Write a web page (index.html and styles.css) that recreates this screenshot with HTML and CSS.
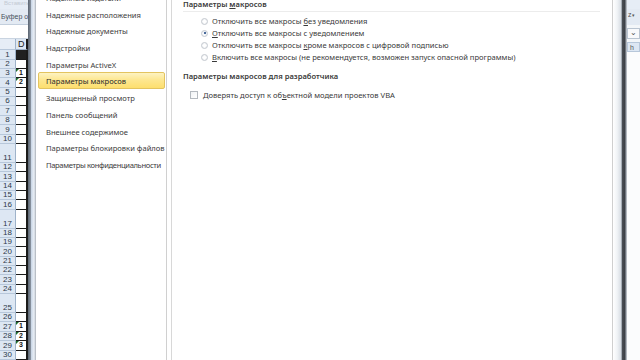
FILE: index.html
```html
<!DOCTYPE html>
<html lang="ru">
<head>
<meta charset="utf-8">
<title>Центр управления безопасностью</title>
<link rel="stylesheet" href="styles.css">
</head>
<body>
<div class="screen">
  <div class="xl-left">
    <div class="xl-ribbon"><span class="faded">Вставить</span></div>
    <div class="xl-group">Буфер о</div>
    <div class="xl-fbar"></div>
    <div class="xl-grid">
      <div class="rh corner"></div><div class="cd head">D</div>
      <div class="rh">1</div><div class="cd black"></div>
      <div class="rh">2</div><div class="cd"></div>
      <div class="rh">3</div><div class="cd tx">1</div>
      <div class="rh">4</div><div class="cd tx">2</div>
      <div class="rh">5</div><div class="cd"></div>
      <div class="rh">6</div><div class="cd"></div>
      <div class="rh">7</div><div class="cd"></div>
      <div class="rh">8</div><div class="cd"></div>
      <div class="rh">9</div><div class="cd"></div>
      <div class="rh">10</div><div class="cd"></div>
      <div class="rh tall">11</div><div class="cd tall"></div>
      <div class="rh">12</div><div class="cd"></div>
      <div class="rh">13</div><div class="cd"></div>
      <div class="rh">14</div><div class="cd"></div>
      <div class="rh">15</div><div class="cd"></div>
      <div class="rh">16</div><div class="cd"></div>
      <div class="rh tall">17</div><div class="cd tall"></div>
      <div class="rh">18</div><div class="cd"></div>
      <div class="rh">19</div><div class="cd"></div>
      <div class="rh">20</div><div class="cd"></div>
      <div class="rh">21</div><div class="cd"></div>
      <div class="rh">22</div><div class="cd"></div>
      <div class="rh">23</div><div class="cd"></div>
      <div class="rh">24</div><div class="cd"></div>
      <div class="rh tall">25</div><div class="cd tall"></div>
      <div class="rh">26</div><div class="cd"></div>
      <div class="rh">27</div><div class="cd tx">1</div>
      <div class="rh">28</div><div class="cd tx">2</div>
      <div class="rh">29</div><div class="cd tx">3</div>
      <div class="rh">30</div><div class="cd"></div>
    </div>
  </div>
  <div class="split-dark"></div>
  <div class="frame-left"></div>

  <div class="dialog">
    <nav class="nav">
      <div class="nav-item cut">Надежные издатели</div>
      <div class="nav-item">Надежные расположения</div>
      <div class="nav-item">Надежные документы</div>
      <div class="nav-item">Надстройки</div>
      <div class="nav-item">Параметры ActiveX</div>
      <div class="nav-item active">Параметры макросов</div>
      <div class="nav-item">Защищенный просмотр</div>
      <div class="nav-item">Панель сообщений</div>
      <div class="nav-item">Внешнее содержимое</div>
      <div class="nav-item">Параметры блокировки файлов</div>
      <div class="nav-item tight">Параметры конфиденциальности</div>
    </nav>
    <div class="nav-sep"></div>
    <main class="content">
      <h2 class="sec-title">Параметры <u>м</u>акросов</h2>
      <div class="options">
        <label class="opt"><span class="radio"></span><span>Отключить все макросы <u>б</u>ез уведомления</span></label>
        <label class="opt"><span class="radio on"></span><span><u>О</u>тключить все макросы с уведомлением</span></label>
        <label class="opt"><span class="radio"></span><span>Отключить все макросы <u>к</u>роме макросов с цифровой подписью</span></label>
        <label class="opt"><span class="radio"></span><span><u>В</u>ключить все макросы (не рекомендуется, возможен запуск опасной программы)</span></label>
      </div>
      <h2 class="sec-title plain">Параметры макросов для разработчика</h2>
      <label class="chk-row"><span class="chk"></span><span>Доверять доступ к об<u>ъ</u>ектной модели проектов VBA</span></label>
    </main>
  </div>

  <div class="frame-right"></div>
  <div class="xl-right">
    <div class="xr-ribbon"></div>
    <div class="xr-group">z<span class="tiny">▾</span></div>
    <div class="xr-drop">⌄</div>
    <div class="xr-head">h</div>
    <div class="xr-col"></div>
  </div>
</div>
</body>
</html>
```

FILE: styles.css
```css
* { box-sizing: border-box; }
html, body { margin: 0; padding: 0; }
body {
  width: 640px;
  height: 360px;
  overflow: hidden;
  background: #ffffff;
  font-family: "Noto Sans", "Open Sans", sans-serif;
  color: #3b3b3b;
}
.screen {
  display: flex;
  width: 640px;
  height: 360px;
  overflow: hidden;
}

/* ---------- Excel left strip ---------- */
.xl-left {
  width: 28px;
  flex: none;
  display: flex;
  flex-direction: column;
  background: #ffffff;
  font-family: "Liberation Sans", Arial, sans-serif;
}
.xl-ribbon {
  height: 9px;
  background: #e6edf6;
  font-size: 6px;
  color: #c3cad3;
  padding-left: 4px;
  overflow: hidden;
  line-height: 6px;
  white-space: nowrap;
}
.xl-group {
  height: 16px;
  background: #e3eaf3;
  font-size: 7px;
  line-height: 16px;
  padding-left: 1px;
  color: #47505c;
  white-space: nowrap;
  border-bottom: 1px solid #c3cfdd;
}
.xl-fbar {
  height: 15px;
  background: #ffffff;
  border-bottom: 1px solid #c9d4e1;
}
.xl-grid {
  display: grid;
  grid-template-columns: 16px 12px;
  grid-template-rows: 11px;
  grid-auto-rows: 9.4px;
}
.rh {
  background: #dde7f3;
  border-bottom: 1px solid #b7c7da;
  border-right: 1px solid #9fb3ca;
  font-size: 8px;
  line-height: 8px;
  color: #2e3a4a;
  display: flex;
  align-items: flex-end;
  justify-content: center;
}
.rh.corner { background: #e6edf6; }
.tall { grid-row: span 2; }
.cd {
  border-bottom: 1px solid #1a1a1a;
  border-right: 2px solid #1a1a1a;
  background: #fff;
  font-size: 7px;
  font-weight: bold;
  line-height: 8px;
  color: #111;
  padding-left: 3px;
  position: relative;
}
.cd.head {
  background: #dde7f3;
  border-bottom: 1px solid #9fb3ca;
  border-right: 2px solid #1a1a1a;
  font-weight: normal;
  font-size: 9px;
  line-height: 10px;
  color: #222;
  padding-left: 2px;
}
.cd.black { background: #202020; }
.cd.tx::before {
  content: "";
  position: absolute;
  left: 0;
  top: 0;
  border-top: 3px solid #1d6b2c;
  border-right: 3px solid transparent;
}
.split-dark {
  width: 3px;
  flex: none;
  background: linear-gradient(90deg, #5a6470, #8c96a3);
}
.frame-left {
  width: 5px;
  flex: none;
  background: linear-gradient(90deg, #c4d2e3, #e4ebf4 60%, #d3d9e0);
  border-right: 1px solid #b9bfc7;
}

/* ---------- Dialog ---------- */
.dialog {
  width: 577px;
  flex: none;
  display: flex;
  background: #ffffff;
  font-size: 7.6px;
}
.nav {
  width: 130px;
  flex: none;
  padding: 0 1px 0 2px;
  display: flex;
  flex-direction: column;
}
.nav-item {
  height: 16.7px;
  line-height: 16px;
  padding-left: 7px;
  color: #3c3c3c;
  white-space: nowrap;
  border: 1px solid transparent;
}
.nav-item.tight { letter-spacing: -0.35px; }
.nav-item.cut { margin-top: -11px; }
.nav-item.active {
  background: linear-gradient(180deg, #fdf3c2 0%, #fde791 45%, #fddf6e 100%);
  border-color: #e3c45f;
  border-radius: 2px;
  color: #2a2a2a;
}
.nav-sep {
  width: 6px;
  flex: none;
  border-left: 1px solid #d0d0d0;
  border-right: 1px solid #d8d8d8;
}
.content {
  flex: 1;
  padding: 0 12px 0 11px;
  border-right: 1px solid #cfcfcf;
}
.sec-title {
  margin: 0;
  font-size: 7.6px;
  font-weight: 600;
  color: #3a3a3a;
  height: 12px;
  line-height: 8px;
  border-bottom: 1px solid #ececec;
}
.sec-title.plain {
  margin-top: 8px;
  border-bottom: none;
  height: auto;
  line-height: 10px;
}
.options {
  display: flex;
  flex-direction: column;
  padding: 3px 0 0 18px;
}
.opt {
  display: flex;
  align-items: center;
  gap: 4px;
  height: 12px;
  color: #3a3a3a;
  white-space: nowrap;
}
.radio {
  width: 7px;
  height: 7px;
  border-radius: 50%;
  border: 1px solid #c4c9cf;
  background: radial-gradient(circle, #ffffff 30%, #e7eaee 100%);
  flex: none;
  position: relative;
}
.radio.on::after {
  content: "";
  position: absolute;
  left: 1.5px;
  top: 1.5px;
  width: 2px;
  height: 2px;
  border-radius: 50%;
  background: #2b4f86;
  box-shadow: 0 0 1px #6d8fc0;
}
.chk-row {
  display: flex;
  align-items: center;
  gap: 5px;
  margin: 9px 0 0 7px;
  color: #3a3a3a;
  white-space: nowrap;
}
.chk {
  width: 8px;
  height: 8px;
  border: 1px solid #b4b9bf;
  background: linear-gradient(135deg, #f0f2f4, #ffffff);
  flex: none;
}

/* ---------- right edge ---------- */
.frame-right {
  width: 14px;
  flex: none;
  background: linear-gradient(90deg, #ffffff 0%, #f0f3f6 30%, #d9dee4 55%, #9aa2ab 62%, #4b4f55 66%, #3c4046 84%, #8a9099 92%, #d5dae0 100%);
}
.xl-right {
  flex: 1;
  display: flex;
  flex-direction: column;
  background: #f3f6f9;
  font-family: "Liberation Sans", Arial, sans-serif;
  font-size: 7px;
  color: #555;
}
.xr-ribbon { height: 9px; background: #e6edf6; }
.xr-group { height: 16px; line-height: 12px; padding-left: 1px; background: #e3eaf3; }
.xr-group .tiny { font-size: 5px; }
.xr-drop {
  height: 11px;
  margin-top: 3px;
  border: 1px solid #b9c4d1;
  background: #f8f9fb;
  text-align: center;
  font-size: 8px;
  line-height: 7px;
}
.xr-head {
  height: 10px;
  margin-top: 3px;
  background: #dde7f3;
  border: 1px solid #b7c7da;
  line-height: 9px;
  padding-left: 2px;
}
.xr-col { flex: 1; background: #fbfcfd; }
```
